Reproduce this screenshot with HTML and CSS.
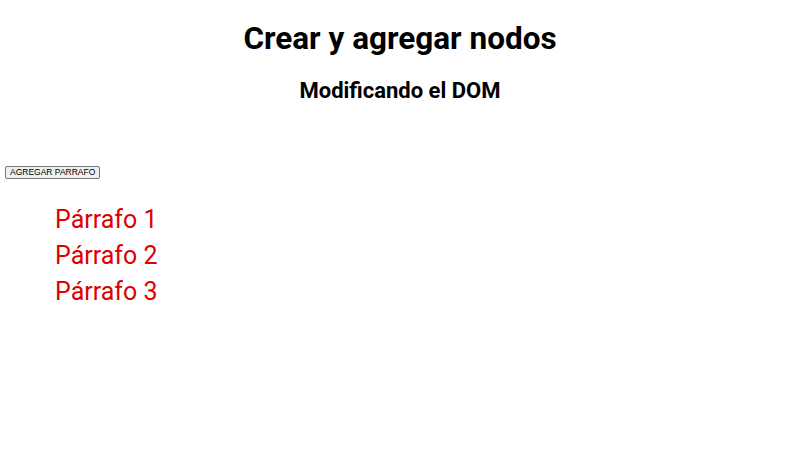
FILE: index.html
```html
<!DOCTYPE html>
<html lang="es">
<head>
<meta charset="utf-8">
<title>Crear y agregar nodos</title>
<link rel="stylesheet" href="styles.css">
</head>
<body>
  <header class="head">
    <h1 class="title">Crear y agregar nodos</h1>
    <h2 class="subtitle">Modificando el DOM</h2>
  </header>
  <button class="add-btn" type="button">AGREGAR PARRAFO</button>
  <div class="list">
    <p class="item">Párrafo 1</p>
    <p class="item">Párrafo 2</p>
    <p class="item">Párrafo 3</p>
  </div>
</body>
</html>
```

FILE: styles.css
```css
body {
  margin: 0;
  padding: 0 5px;
  font-family: Roboto, "Noto Sans", sans-serif;
  background: #fff;
  color: #000;
}

.head {
  text-align: center;
  padding-top: 20px;
}

.title {
  margin: 0;
  font-size: 31.5px;
  font-weight: 700;
}

.subtitle {
  margin: 21px 0 0;
  font-size: 22px;
  font-weight: 700;
}

.add-btn {
  display: block;
  margin-top: 63px;
  font-family: "Liberation Sans", Arial, sans-serif;
  font-size: 8.5px;
  line-height: 9px;
  height: 13px;
  padding: 1px 4px;
  border: 1px solid #767676;
  border-radius: 2px;
  background: #efefef;
  color: #000;
}

.list {
  margin-top: 23px;
  padding-left: 50px;
}

.item {
  margin: 0;
  font-size: 25px;
  line-height: 36px;
  color: #e00000;
}
```
